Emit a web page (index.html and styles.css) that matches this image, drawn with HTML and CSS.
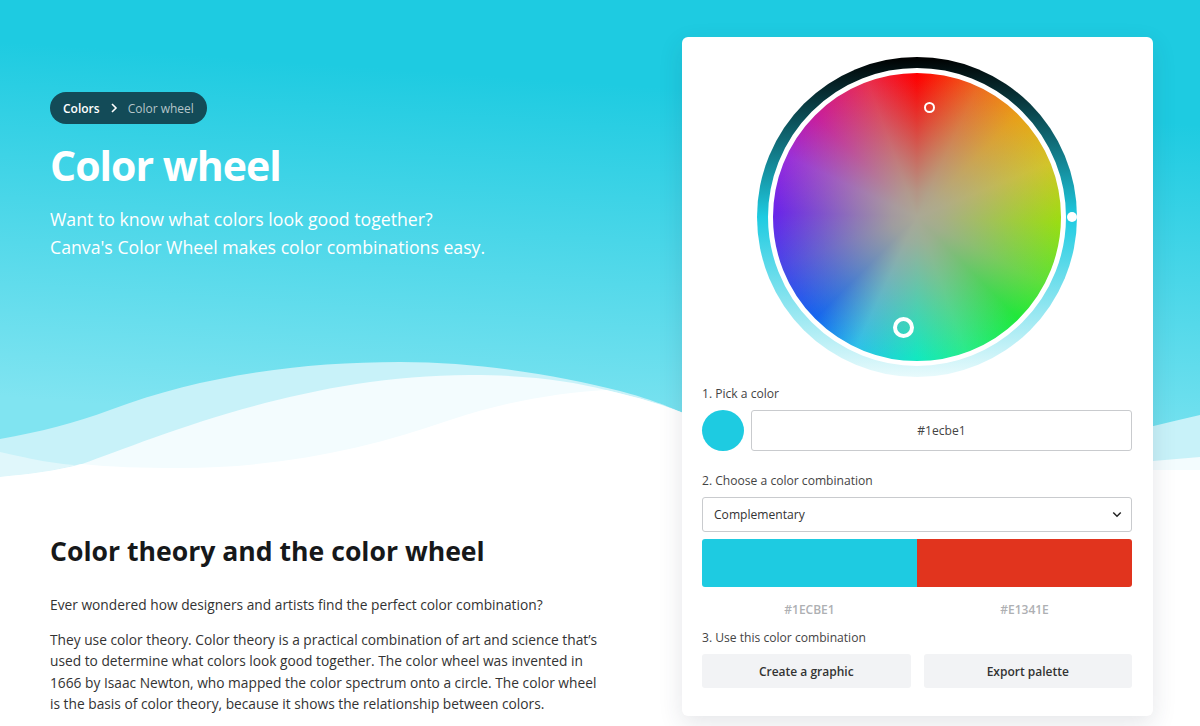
FILE: index.html
```html
<!DOCTYPE html>
<html lang="en">
<head>
  <meta charset="UTF-8">
  <title>Color wheel</title>
  <link rel="stylesheet" href="styles.css">
</head>
<body>
  <div class="page">
    <!-- Waves behind the hero -->
    <svg class="waves" viewBox="0 0 1200 480" width="1200" height="480" aria-hidden="true">
      <path fill="#c8f2f9" d="M0 439C40 432 75 423 110 410C200 376 300 362 400 362C480 362 560 376 620 391C650 399 665 405 690 416C760 448 830 470 900 470C1000 470 1090 440 1200 415V480H0Z"/>
      <path fill="#e0f7fb" d="M0 452C30 459 55 464 85 466L80 464C55 471 30 474 0 477Z"/>
      <path fill="#f3fcfe" d="M0 477C30 474 55 471 82 464C150 440 300 375 470 375C530 375 570 381 606 390C640 398 665 405 690 416L900 480H1153V461L1200 457V480H0Z"/>
      <path fill="#ffffff" d="M0 477C30 474 55 471 82 464C110 467 140 468 180 468C280 468 370 448 450 420C510 400 560 393 606 390C640 398 665 405 690 416L900 480H1153V470L1200 470V480H0Z"/>
    </svg>

    <div class="left">
      <div class="crumbs">
        <span class="crumb-link">Colors</span>
        <svg class="crumb-sep" viewBox="0 0 8 12" width="8" height="12"><path d="M2 2l4 4-4 4" fill="none" stroke="#fff" stroke-width="1.6"/></svg>
        <span class="crumb-now">Color wheel</span>
      </div>
      <h1>Color wheel</h1>
      <p class="lead">Want to know what colors look good together?<br>Canva's Color Wheel makes color combinations easy.</p>

      <div class="article">
        <h2>Color theory and the color wheel</h2>
        <p>Ever wondered how designers and artists find the perfect color combination?</p>
        <p>They use color theory. Color theory is a practical combination of art and science that’s used to determine what colors look good together. The color wheel was invented in 1666 by Isaac Newton, who mapped the color spectrum onto a circle. The color wheel is the basis of color theory, because it shows the relationship between colors.</p>
      </div>
    </div>

    <div class="card">
      <div class="ring">
        <div class="wheel">
          <span class="dot dot-small"></span>
          <span class="dot dot-big"></span>
        </div>
        <span class="ring-dot"></span>
      </div>

      <div class="label first">1. Pick a color</div>
      <div class="pick">
        <div class="swatch"></div>
        <div class="hex-input">#1ecbe1</div>
      </div>

      <div class="label second">2. Choose a color combination</div>
      <div class="select">
        <span>Complementary</span>
        <svg viewBox="0 0 12 8" width="10" height="7"><path d="M1.5 1.5L6 6l4.5-4.5" fill="none" stroke="#222" stroke-width="1.8"/></svg>
      </div>

      <div class="strip">
        <div class="strip-a"></div>
        <div class="strip-b"></div>
      </div>
      <div class="codes">
        <span>#1ECBE1</span>
        <span>#E1341E</span>
      </div>

      <div class="label third">3. Use this color combination</div>
      <div class="actions">
        <button>Create a graphic</button>
        <button>Export palette</button>
      </div>
    </div>
  </div>
</body>
</html>
```

FILE: styles.css
```css
* {
  box-sizing: border-box;
}

body {
  margin: 0;
  font-family: 'Open Sans', sans-serif;
  color: #333;
  background: #fff;
}

.page {
  position: relative;
  display: flex;
  justify-content: space-between;
  height: 726px;
  overflow: hidden;
  padding: 37px 47px 0 50px;
  background: linear-gradient(184deg, #1ecbe1 125px, #80e4f1 480px) no-repeat;
  background-size: 100% 480px;
}

.waves {
  position: absolute;
  left: 0;
  top: 0;
}

/* left side */
.left {
  position: relative;
  width: 552px;
  padding-top: 55px;
}

.crumbs {
  display: inline-flex;
  align-items: center;
  height: 32px;
  padding: 0 13px;
  border-radius: 16px;
  background: #134b58;
  font-size: 12px;
}

.crumb-link {
  color: #fff;
  font-weight: 600;
}

.crumb-sep {
  margin: 0 10px;
}

.crumb-now {
  color: #b5c5c9;
}

h1 {
  margin: 12px 0 0;
  font-size: 41px;
  line-height: 58px;
  font-weight: 700;
  letter-spacing: -1px;
  color: #fff;
}

.lead {
  margin: 11px 0 0;
  font-size: 17.7px;
  line-height: 28px;
  color: #fff;
}

.article {
  margin-top: 272px;
}

h2 {
  margin: 0 0 25px;
  font-size: 26.6px;
  line-height: 36px;
  font-weight: 700;
  color: #16181a;
}

.article p {
  margin: 0 0 13px;
  font-size: 13.75px;
  line-height: 21.5px;
}

/* tool card */
.card {
  position: relative;
  width: 471px;
  height: 679px;
  padding: 20px 21px 20px 20px;
  background: #fff;
  border-radius: 6px;
  box-shadow: 0 8px 24px rgba(40, 50, 70, 0.12);
}

.ring {
  position: relative;
  width: 320px;
  height: 320px;
  margin: 0 auto;
  padding: 11px;
  border-radius: 50%;
  background: linear-gradient(#000 0%, #1ecbe1 50%, #e8fafc 100%);
}

.wheel {
  position: relative;
  width: 298px;
  height: 298px;
  border: 5px solid #fff;
  border-radius: 50%;
  background:
    radial-gradient(circle closest-side, rgba(170, 168, 150, 1) 0%, rgba(170, 168, 150, 0.88) 18%, rgba(170, 168, 150, 0.62) 42%, rgba(170, 168, 150, 0.32) 68%, rgba(170, 168, 150, 0) 98%),
    conic-gradient(#ff0000 0deg, #ec6a22 25deg, #e8a018 45deg, #d2c42a 68deg, #9bdc14 92deg, #5ce03a 118deg, #20e83a 135deg, #2aeb8a 160deg, #12e8c0 180deg, #30c0e8 205deg, #1566ee 225deg, #4a48e6 250deg, #6a25e8 272deg, #9a30d8 295deg, #c81e9c 315deg, #e83050 340deg, #ff0000 360deg);
}

.dot {
  position: absolute;
  border-radius: 50%;
  border-style: solid;
  border-color: #fff;
}

.dot-small {
  left: 151px;
  top: 29px;
  width: 11px;
  height: 11px;
  border-width: 2px;
}

.dot-big {
  left: 120px;
  top: 244px;
  width: 21px;
  height: 21px;
  border-width: 4px;
}

.ring-dot {
  position: absolute;
  right: 0;
  top: 155px;
  width: 10px;
  height: 10px;
  border-radius: 50%;
  background: #fff;
}

.label {
  font-size: 12.1px;
  line-height: 18px;
  color: #444;
}

.label.first {
  margin-top: 8px;
}

.label.second {
  margin-top: 21px;
}

.label.third {
  margin-top: 11px;
}

.pick {
  display: flex;
  gap: 7px;
  margin-top: 7px;
}

.swatch {
  width: 42px;
  height: 41px;
  border-radius: 50%;
  background: #1ecbe1;
}

.hex-input {
  flex: 1;
  display: flex;
  align-items: center;
  justify-content: center;
  border: 1px solid #c9cbce;
  border-radius: 3px;
  font-size: 12.1px;
  color: #444;
}

.select {
  display: flex;
  align-items: center;
  justify-content: space-between;
  height: 35px;
  margin-top: 7px;
  padding: 0 9px 0 11px;
  border: 1px solid #c9cbce;
  border-radius: 3px;
  font-size: 12.1px;
  color: #333;
}

.strip {
  display: flex;
  height: 48px;
  margin-top: 7px;
  border-radius: 3px;
  overflow: hidden;
}

.strip-a,
.strip-b {
  flex: 1;
}

.strip-a {
  background: #1ecbe1;
}

.strip-b {
  background: #e1341e;
}

.codes {
  display: flex;
  margin-top: 15px;
  font-size: 12px;
  line-height: 16px;
  font-weight: 600;
  color: #aeb0b3;
  text-align: center;
}

.codes span {
  flex: 1;
}

.actions {
  display: flex;
  gap: 13px;
  margin-top: 7px;
}

.actions button {
  flex: 1;
  height: 34px;
  border: none;
  border-radius: 3px;
  background: #f2f3f5;
  font-family: inherit;
  font-size: 12px;
  font-weight: 600;
  color: #333;
}
```
